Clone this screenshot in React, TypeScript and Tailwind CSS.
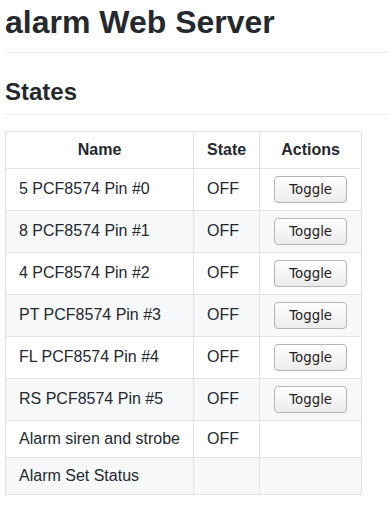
const rows: { name: string; state: string; toggle: boolean }[] = [
	{ name: "5 PCF8574 Pin #0", state: "OFF", toggle: true },
	{ name: "8 PCF8574 Pin #1", state: "OFF", toggle: true },
	{ name: "4 PCF8574 Pin #2", state: "OFF", toggle: true },
	{ name: "PT PCF8574 Pin #3", state: "OFF", toggle: true },
	{ name: "FL PCF8574 Pin #4", state: "OFF", toggle: true },
	{ name: "RS PCF8574 Pin #5", state: "OFF", toggle: true },
	{ name: "Alarm siren and strobe", state: "OFF", toggle: false },
	{ name: "Alarm Set Status", state: "", toggle: false },
];

const cell = "border border-[#dfe2e5] px-[13px] py-[6px] align-middle";

export default function App() {
	return (
		<div className="min-h-screen bg-white pl-[5px] pt-[2px] text-[16px] leading-[1.5] text-[#24292e] font-['Liberation_Sans',Arial,sans-serif]">
			<h1 className="border-b border-[#eaecef] pb-[9.6px] text-[32px] font-bold leading-[1.25]">
				alarm Web Server
			</h1>
			<h2 className="mt-[24px] mb-[16px] border-b border-[#eaecef] pb-[7.2px] text-[24px] font-bold leading-[1.25]">
				States
			</h2>

			<table className="border-collapse">
				<thead>
					<tr className="bg-white">
						<th className={`${cell} w-[188px] text-center font-bold`}>Name</th>
						<th className={`${cell} w-[66px] text-center font-bold`}>State</th>
						<th className={`${cell} w-[102px] text-center font-bold`}>Actions</th>
					</tr>
				</thead>
				<tbody>
					{rows.map((row, i) => (
						<tr key={row.name} className={i % 2 === 1 ? "bg-[#f6f8fa]" : "bg-white"}>
							<td className={`${cell} whitespace-nowrap`}>{row.name}</td>
							<td className={cell}>{row.state}</td>
							<td className={`${cell} ${row.toggle ? "h-[42px]" : ""}`}>
								{row.toggle && (
									<button className="ml-px block h-[27px] w-[73px] rounded-[4px] border border-[#b4b4b4] bg-gradient-to-b from-white to-[#ececec] pt-px text-[13.33px] leading-none text-[#222] font-['DejaVu_Sans',sans-serif]">
										Toggle
									</button>
								)}
							</td>
						</tr>
					))}
				</tbody>
			</table>
		</div>
	);
}
